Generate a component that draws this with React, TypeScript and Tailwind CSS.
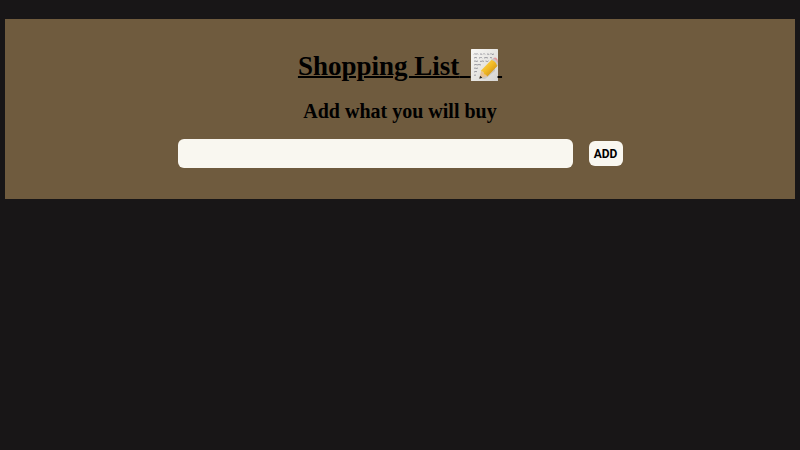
import { useState } from "react";

function MemoIcon() {
  return (
    <svg
      className="inline-block h-8 w-[27px] align-[-6px]"
      viewBox="0 0 27 32"
      role="img"
      aria-label="memo"
    >
      <defs>
        <linearGradient id="sheet" x1="0" y1="0" x2="1" y2="1">
          <stop offset="0" stopColor="#f8f7f4" />
          <stop offset="1" stopColor="#d6d5d2" />
        </linearGradient>
        <linearGradient id="wood" x1="0" y1="0" x2="1" y2="1">
          <stop offset="0" stopColor="#ffe267" />
          <stop offset="0.5" stopColor="#f0b824" />
          <stop offset="1" stopColor="#b87912" />
        </linearGradient>
      </defs>
      <rect width="27" height="32" rx="0.5" fill="url(#sheet)" />
      <g fill="none" stroke="#777783" strokeWidth="0.7">
        <path d="M3 5.5l1-1 1 1 1-1 1 1M9 5l2 .2M12 5.5l1-1 1 1M16 5l2 .3M19 5.5l1-1 1 1 2-.5" />
        <path d="M3 9l2-.6 1 .7M8 8.5l1 .7 1-1 1 1M13 9l2-.5 2 .5M19 8.5l2 .4" />
        <path d="M3 12.5l1-.8 1 .8 2-.5M9 12l1 .7 1-.8 2 .5M14.5 12l2 .5 1-.7" />
        <path d="M3 16l2-.6 1 .6 2-.5 2 .5M3 19.5l1-.7 1 .7 2-.5M3 23l2-.6 1 .4M3 26.5l1-.6 1 .5" />
      </g>
      <path d="M10 30l14-12v4L14 30z" fill="#8a8a8a" opacity="0.25" />
      <path d="M8.5 29.5l1.5-8 6.5 5.7z" fill="#e9c391" />
      <path d="M8.3 29.7l.8-3 2.3 2z" fill="#252423" />
      <path d="M9.8 21.8L20.8 10.5q5 1.2 5.8 6.2L16.4 27.6q-1-2-3-2.4-.6-2.4-3.6-3.4z" fill="url(#wood)" />
      <path d="M20.4 11l2-2q4.6 1.2 5.2 5.6l-1.5 2.3q-1.2-4.6-5.7-5.9z" fill="#c9c5c7" />
      <path d="M22.3 9.2q1.3-1 2.7-.5 2 1 2 5.2-1.2-3.5-4.7-4.7z" fill="#e59a9d" />
    </svg>
  );
}

export default function App() {
  const [item, setItem] = useState("");

  return (
    <div className="min-h-screen bg-[#181617] px-[5px] pt-[19px] font-['Liberation_Serif',serif] text-black">
      <main className="flex flex-col items-center bg-[#6f5b3e] pt-[29px] pb-[31px]">
        <h1 className="text-[27px] leading-9 font-bold whitespace-nowrap underline decoration-2">
          Shopping List{"\u00a0\u200a\u200a"}
          <MemoIcon />
          {"\u200a\u200a"}
        </h1>
        <h2 className="mt-[15px] text-xl leading-6 font-bold">
          <label htmlFor="item">Add what you will buy</label>
        </h2>
        <form
          className="mt-4 flex w-full items-center justify-center gap-4"
          onSubmit={(event) => event.preventDefault()}
        >
          <input
            id="item"
            type="text"
            value={item}
            onChange={(event) => setItem(event.target.value)}
            className="h-[29px] w-1/2 rounded-md bg-[#f9f7f0] px-2 text-base outline-none"
          />
          <button
            type="submit"
            className="h-[25px] w-[34px] rounded-md bg-[#f9f7f0] font-['Roboto',sans-serif] text-xs font-bold"
          >
            ADD
          </button>
        </form>
      </main>
    </div>
  );
}
